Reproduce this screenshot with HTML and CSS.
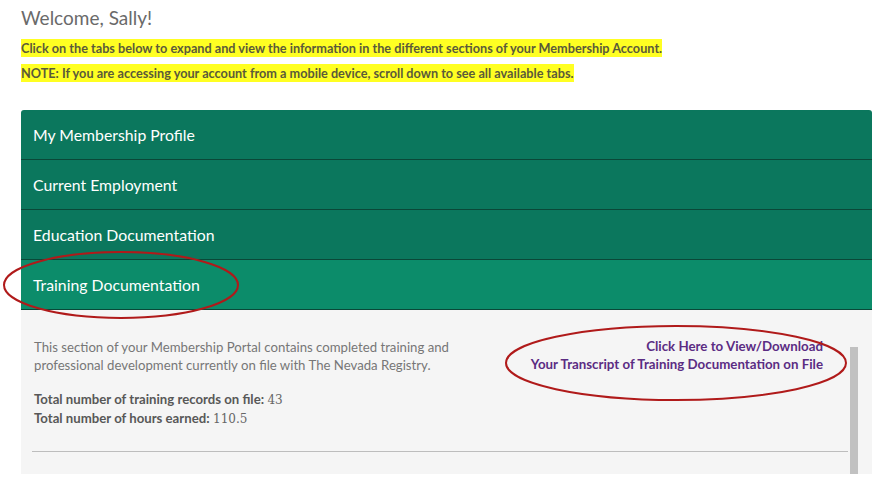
FILE: index.html
```html
<!DOCTYPE html>
<html>
<head>
<meta charset="utf-8">
<link rel="stylesheet" href="styles.css">
</head>
<body>
<div class="page">
  <h1 class="welcome">Welcome, Sally!</h1>
  <p class="notice"><span class="hl">Click on the tabs below to expand and view the information in the different sections of your Membership Account.</span></p>
  <p class="notice"><span class="hl">NOTE: If you are accessing your account from a mobile device, scroll down to see all available tabs.</span></p>

  <div class="accordion">
    <div class="tab">My Membership Profile</div>
    <div class="tab">Current Employment</div>
    <div class="tab">Education Documentation</div>
    <div class="tab active">Training Documentation</div>
    <div class="panel">
      <div class="panel-inner">
        <div class="panel-row">
          <div class="panel-text">
            <p class="desc">This section of your Membership Portal contains completed training and professional development currently on file with The Nevada Registry.</p>
            <p class="stats"><b>Total number of training records on file:</b> <span class="num">43</span><br><b>Total number of hours earned:</b> <span class="num">110.5</span></p>
          </div>
          <a class="transcript" href="#">Click Here to View/Download<br>Your Transcript of Training Documentation on File</a>
        </div>
        <hr class="rule">
      </div>
      <div class="scrollbar"></div>
    </div>
  </div>

  <svg class="marks" width="890" height="493" viewBox="0 0 890 493">
    <ellipse cx="121" cy="285" rx="117" ry="33" />
    <ellipse cx="676" cy="363" rx="170" ry="37" />
  </svg>
</div>
</body>
</html>
```

FILE: styles.css
```css
html, body {
  margin: 0;
  padding: 0;
  background: #ffffff;
}
.page {
  position: relative;
  width: 890px;
  height: 493px;
  overflow: hidden;
  padding: 6px 18px 0 21px;
  box-sizing: border-box;
  font-family: "Lato", "Liberation Sans", sans-serif;
}
.welcome {
  margin: 0 0 9px 0;
  font-size: 19px;
  font-weight: 400;
  color: #6a6a6a;
  line-height: 24px;
}
.notice {
  margin: 0 0 7px 0;
  font-size: 12.7px;
  font-weight: 700;
  color: #5a5a3a;
  line-height: 18px;
}
.hl {
  background: #ffff22;
  padding: 1px 0;
}
.accordion {
  margin-top: 28px;
  width: 851px;
}
.tab {
  height: 49px;
  border-bottom: 1px solid #0a4838;
  background: #0b775d;
  color: #ffffff;
  font-size: 15.8px;
  display: flex;
  align-items: center;
  padding-left: 12px;
}
.tab:first-child {
  border-radius: 3px 3px 0 0;
}
.tab.active {
  background: #0c8c6a;
}
.panel {
  position: relative;
  background: #f5f5f5;
  height: 164px;
  display: flex;
}
.panel-inner {
  flex: 1;
  padding: 28px 2px 0 11px;
}
.panel-row {
  display: flex;
  justify-content: space-between;
}
.panel-text {
  width: 450px;
  padding-left: 2px;
}
.desc {
  margin: 0 0 16px 0;
  font-size: 13.2px;
  line-height: 18px;
  color: #777777;
}
.stats {
  margin: 0;
  font-size: 13.2px;
  line-height: 18px;
  color: #666666;
}
.stats b {
  color: #585858;
}
.num {
  font-family: "DejaVu Serif", "Liberation Serif", serif;
  font-size: 12px;
}
.transcript {
  text-align: right;
  font-size: 13.3px;
  font-weight: 700;
  line-height: 18px;
  color: #5b2c83;
  text-decoration: none;
  margin: -1px 25px 0 0;
}
.rule {
  margin: 23px 0 0 0;
  border: 0;
  border-top: 1px solid #bdbdbd;
}
.scrollbar {
  width: 8px;
  margin: 37px 14px 0 0;
  background: #c1c1c1;
}
.marks {
  position: absolute;
  left: 0;
  top: 0;
  pointer-events: none;
}
.marks ellipse {
  fill: none;
  stroke: #b01a1a;
  stroke-width: 2;
}
```
